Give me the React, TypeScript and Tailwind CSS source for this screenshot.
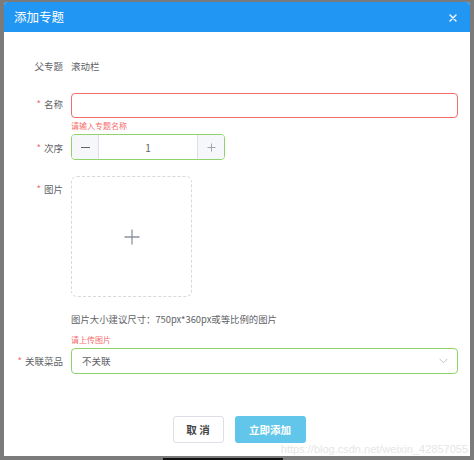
import React from 'react';

const font = { fontFamily: '"Noto Sans CJK SC", "Liberation Sans", sans-serif' };

function Label({ text, required, className = '' }: { text: string; required?: boolean; className?: string }) {
  return (
    <div className={`w-[67px] shrink-0 pr-[8px] text-right text-[9.5px] leading-[14px] text-[#606266] ${className}`}>
      {required && <span className="mr-[3px] text-[#f56c6c]">*</span>}
      {text}
    </div>
  );
}

export default function App() {
  return (
    <div className="relative flex h-[460px] w-[474px] flex-col overflow-hidden bg-[#7b7b7b]" style={font}>
      <div className="ml-[4px] mt-[2px] flex h-[454px] w-[466px] flex-col overflow-hidden rounded-t-[4px] bg-white">
        {/* header */}
        <div className="flex h-[30px] shrink-0 items-center justify-between bg-[#2196f3] pl-[10px] pr-[13px]">
          <span className="text-[12.5px] text-white">添加专题</span>
          <svg width="8" height="8" viewBox="0 0 8 8" className="mt-[1px]">
            <path d="M1 1L7 7M7 1L1 7" stroke="#fff" strokeWidth="1.4" strokeLinecap="round" />
          </svg>
        </div>

        {/* 父专题 */}
        <div className="mt-[27px] flex h-[14px] items-center">
          <Label text="父专题" />
          <span className="text-[9.5px] leading-[14px] text-[#606266]">滚动栏</span>
        </div>

        {/* 名称 */}
        <div className="mt-[20px] flex">
          <Label text="名称" required className="pt-[4px]" />
          <div className="flex flex-col">
            <div className="h-[25px] w-[387px] rounded-[4px] border border-[#f56c6c] bg-white" />
            <div className="mt-[3px] text-[8px] leading-[10px] text-[#f56c6c]">请输入专题名称</div>
          </div>
        </div>

        {/* 次序 */}
        <div className="mt-[3px] flex">
          <Label text="次序" required className="pt-[7px]" />
          <div className="flex h-[26px] w-[154px] overflow-hidden rounded-[4px] border border-[#8fd36a]">
            <div className="flex w-[27px] items-center justify-center border-r border-[#dcdfe6] bg-[#f5f7fa]">
              <div className="h-[1px] w-[9px] bg-[#606266]" />
            </div>
            <div className="flex flex-1 items-center justify-center text-[10px] text-[#606266]">1</div>
            <div className="flex w-[27px] items-center justify-center border-l border-[#dcdfe6] bg-[#f5f7fa]">
              <svg width="9" height="9" viewBox="0 0 9 9">
                <path d="M4.5 0.5V8.5M0.5 4.5H8.5" stroke="#a0a4ab" strokeWidth="1" />
              </svg>
            </div>
          </div>
        </div>

        {/* 图片 */}
        <div className="mt-[16px] flex">
          <Label text="图片" required className="pt-[6px]" />
          <div className="flex h-[121px] w-[121px] items-center justify-center rounded-[6px] border border-dashed border-[#d9d9d9]">
            <svg width="16" height="16" viewBox="0 0 16 16">
              <path d="M8 0.5V15.5M0.5 8H15.5" stroke="#8c939d" strokeWidth="1.3" />
            </svg>
          </div>
        </div>

        {/* hint */}
        <div className="mt-[15px] flex">
          <Label text="" />
          <div className="text-[9.4px] leading-[14px] text-[#606266]">图片大小建议尺寸：750px*360px或等比例的图片</div>
        </div>
        <div className="mt-[9px] flex">
          <Label text="" />
          <div className="text-[8px] leading-[10px] text-[#f56c6c]">请上传图片</div>
        </div>

        {/* 关联菜品 */}
        <div className="mt-[3px] flex">
          <Label text="关联菜品" required className="pt-[6px]" />
          <div className="flex h-[26px] w-[387px] items-center justify-between rounded-[4px] border border-[#8fd36a] pl-[10px] pr-[9px]">
            <span className="text-[9.5px] text-[#606266]">不关联</span>
            <svg width="9" height="6" viewBox="0 0 9 6">
              <path d="M0.5 0.8L4.5 4.8L8.5 0.8" stroke="#c0c4cc" strokeWidth="1" fill="none" />
            </svg>
          </div>
        </div>

        {/* buttons */}
        <div className="mt-[42px] flex justify-center gap-[11px] pl-[4px]">
          <button className="flex h-[27px] w-[51px] items-center justify-center rounded-[3px] border border-[#dcdfe6] bg-white text-[10.5px] font-bold text-[#444]">
            取 消
          </button>
          <button className="flex h-[27px] w-[71px] items-center justify-center rounded-[3px] bg-[#62c6ea] text-[10.5px] font-bold text-white">
            立即添加
          </button>
        </div>
      </div>

      <div className="flex h-[4px] items-end">
        <div className="ml-[163px] h-[2px] w-[120px] bg-[#111]" />
      </div>

      <div
        className="absolute bottom-[4px] right-[6px] text-[11px] leading-[14px] text-[#e6e6e6]"
        style={{ fontFamily: '"Liberation Sans", sans-serif' }}
      >
        https://blog.csdn.net/weixin_42857055
      </div>
    </div>
  );
}
